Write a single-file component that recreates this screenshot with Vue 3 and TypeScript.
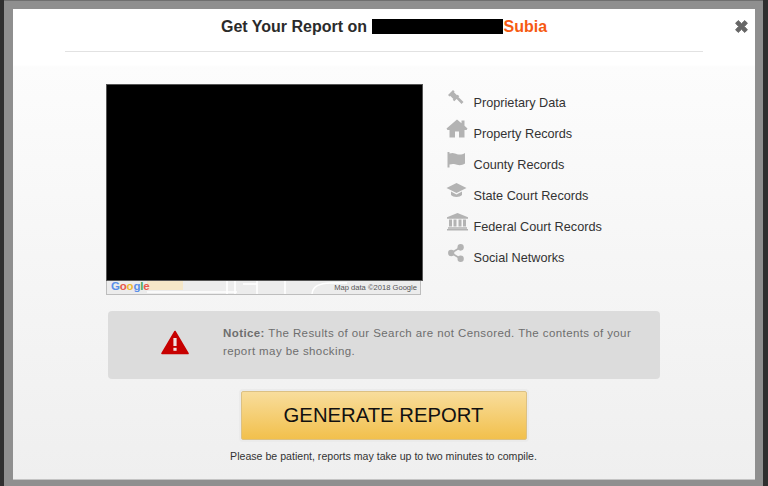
<template>
  <div class="backdrop">
    <div class="frame">
      <div class="modal">
        <button class="close" aria-label="Close">
          <svg width="13" height="13" viewBox="0 0 13 13">
            <path d="M3.2 0.6 6.5 3.7 9.8 0.6 12.4 3.2 9.3 6.5 12.4 9.8 9.8 12.4 6.5 9.3 3.2 12.4 0.6 9.8 3.7 6.5 0.6 3.2Z" fill="#666" stroke="#666" stroke-linejoin="round" />
          </svg>
        </button>

        <header class="head">
          <h1 class="title">
            Get Your Report on <span class="redacted"></span><span class="name">Subia</span>
          </h1>
        </header>

        <section class="top">
          <div class="map">
            <div class="map-black"></div>
            <div class="map-strip">
              <svg class="map-lines" width="314" height="14" viewBox="0 0 314 14" fill="none" stroke="#fff" stroke-width="1.5">
                <path d="M120 0V14M128 0V14M136 3H150V0M150 3V14M178 0V14M205 14C205 6 212 2 224 2H240" />
                <path d="M40 11H130" />
              </svg>
              <span class="map-sand"></span>
              <span class="google"><i class="g-b">G</i><i class="g-r">o</i><i class="g-y">o</i><i class="g-b">g</i><i class="g-g">l</i><i class="g-r">e</i></span>
              <span class="map-data">Map data ©2018 Google</span>
            </div>
          </div>

          <ul class="sources">
            <li v-for="item in sources" :key="item.label" class="source">
              <span class="source-icon">
                <svg width="22" height="20" viewBox="0 0 22 20" overflow="visible" v-html="item.icon"></svg>
              </span>
              <span class="source-label">{{ item.label }}</span>
            </li>
          </ul>
        </section>

        <section class="notice">
          <svg class="notice-icon" width="28" height="25" viewBox="0 0 28 25">
            <path d="M14 1.5 27 23.5H1Z" fill="#c70000" stroke="#c70000" stroke-width="1.6" stroke-linejoin="round" />
            <rect x="12.4" y="8" width="3.2" height="8" fill="#efe3e3" />
            <rect x="12.4" y="17.8" width="3.2" height="3" fill="#efe3e3" />
          </svg>
          <p class="notice-text">
            <strong>Notice:</strong> The Results of our Search are not Censored. The contents of your report may be shocking.
          </p>
        </section>

        <div class="action">
          <button class="generate">GENERATE REPORT</button>
          <p class="patience">Please be patient, reports may take up to two minutes to compile.</p>
        </div>
      </div>
    </div>
  </div>
</template>

<script setup lang="ts">
interface Source {
  label: string;
  icon: string;
}

const fill = 'fill="#b3b3b3"';

const sources: Source[] = [
  {
    label: "Proprietary Data",
    icon: `<path ${fill} d="M2 5 7 0 8.6 1.6 8 2.3 11 5.3 11.7 4.7 13.3 6.3 8.3 11.3 6.7 9.7 7.4 9 4.4 6 3.6 6.6ZM10.2 8.6 12.2 6.8 17.5 12 15.5 14Z"/>`,
  },
  {
    label: "Property Records",
    icon: `<path ${fill} transform="translate(0 -2)" d="M11 .5 15.5 4.3V1.5H18.5V6.8L21.5 9.6 20.5 11H18.5V18.5H13V12.5H9V18.5H3.5V11H1.5L.5 9.6Z"/>`,
  },
  {
    label: "County Records",
    icon: `<path ${fill} d="M1.5 0H3.5V1.6C7 .2 9 1.6 11 2.2 14 3 16.5 2.4 19 1V11.6C16.5 13 14 13.6 11 12.8 9 12.2 7 11.2 3.5 12.6V15.5H1.5Z"/>`,
  },
  {
    label: "State Court Records",
    icon: `<path ${fill} transform="translate(0.5 -2)" d="M10 2 20 7 10 12 0 7ZM4.5 10.5 10 13.4 15.5 10.5V14C13.5 16.6 6.5 16.6 4.5 14Z"/>`,
  },
  {
    label: "Federal Court Records",
    icon: `<path ${fill} transform="translate(0.5 -1) scale(1 .87)" d="M11 0 21.5 5V6.5H.5V5ZM2.5 7.5H5.5V15.5H2.5ZM7 7.5H10V15.5H7ZM12 7.5H15V15.5H12ZM16.5 7.5H19.5V15.5H16.5ZM1.5 16.5H20.5V18H1.5ZM.5 18.5H21.5V20H.5Z"/>`,
  },
  {
    label: "Social Networks",
    icon: `<g transform="translate(1.6 -1) scale(.9 .95)"><circle ${fill} cx="14.5" cy="3.5" r="3.5"/><circle ${fill} cx="4" cy="9.5" r="3.5"/><circle ${fill} cx="14.5" cy="15.5" r="3.5"/><path d="M14.5 3.5 4 9.5 14.5 15.5" fill="none" stroke="#b3b3b3" stroke-width="1.8"/></g>`,
  },
];
</script>

<style>
html,
body {
  margin: 0;
  background: #2f2f2f;
  overflow: hidden;
}
</style>

<style scoped>
.backdrop {
  width: 768px;
  height: 486px;
  padding: 0 5px 0 4px;
  box-sizing: border-box;
  background: #2f2f2f;
  font-family: "Liberation Sans", Arial, sans-serif;
}

.frame {
  height: 100%;
  padding: 8px 8px 6px 9px;
  box-sizing: border-box;
  background: #8f8f8f;
  border-top: 1px solid #6f6f6f;
}

.modal {
  position: relative;
  height: 471px;
  box-sizing: border-box;
  background: linear-gradient(#ffffff 0, #ffffff 56px, #fcfcfc 58px, #efefef 100%);
  border-bottom: 1px solid #c4c4c4;
}

.close {
  position: absolute;
  top: 11px;
  right: 7px;
  padding: 0;
  border: 0;
  background: none;
  line-height: 0;
}

.head {
  margin: 0 52px;
  height: 42px;
  border-bottom: 1px solid #e2e2e2;
}

.title {
  margin: 0;
  padding-top: 8px;
  font-size: 16px;
  line-height: 20px;
  font-weight: 700;
  color: #2b2b2b;
  text-align: center;
}

.redacted {
  display: inline-block;
  width: 131px;
  height: 15px;
  margin-left: 1px;
  vertical-align: -2px;
  background: #000;
}

.name {
  color: #f65a12;
}

.top {
  display: flex;
  margin: 32px 0 0 93px;
}

.map {
  width: 317px;
  flex: none;
}

.map-black {
  height: 197px;
  background: #000;
  border: 1px solid #555;
  box-sizing: border-box;
}

.map-strip {
  position: relative;
  width: 315px;
  height: 14px;
  box-sizing: border-box;
  background: #ececec;
  border: 1px solid #bdbdbd;
  border-top: 0;
  overflow: hidden;
}

.map-lines {
  position: absolute;
  left: 0;
  top: 0;
}

.map-sand {
  position: absolute;
  left: 40px;
  top: 0;
  width: 36px;
  height: 9px;
  background: #f5e7c8;
}

.google {
  position: absolute;
  left: 4px;
  top: -2px;
  font-size: 11.5px;
  letter-spacing: -0.2px;
  line-height: 14px;
  font-weight: 700;
}

.google i {
  font-style: normal;
}

.g-b { color: #5a8fe8; }
.g-r { color: #e8584c; }
.g-y { color: #eeb92f; }
.g-g { color: #46a85c; }

.map-data {
  position: absolute;
  right: 3px;
  top: 2px;
  font-size: 7.6px;
  line-height: 10px;
  color: #555;
  white-space: nowrap;
}

.sources {
  list-style: none;
  margin: 6px 0 0 23px;
  padding: 0;
}

.source {
  display: flex;
  height: 31px;
}

.source-icon {
  width: 27.5px;
  line-height: 0;
  flex: none;
}

.source-label {
  padding-top: 5px;
  font-size: 12.7px;
  line-height: 16px;
  color: #333;
  white-space: nowrap;
}

.notice {
  display: flex;
  align-items: center;
  width: 552px;
  height: 68px;
  margin: 16px 0 0 95px;
  padding: 0 20px 6px 53px;
  box-sizing: border-box;
  background: #dcdcdc;
  border-radius: 4px;
}

.notice-icon {
  flex: none;
  margin-right: 34px;
}

.notice-text {
  margin: 0;
  font-size: 11.5px;
  line-height: 18px;
  letter-spacing: 0.41px;
  color: #6e6e6e;
}

.action {
  text-align: center;
  margin-top: 12px;
  margin-left: -1px;
}

.generate {
  display: block;
  width: 286px;
  height: 49px;
  margin: 0 auto;
  padding: 0;
  border: 1px solid #dcc184;
  border-radius: 2px;
  background: linear-gradient(#f8dd9c, #f2c04c);
  box-shadow: 0 0 0 2px #ebebeb;
  font-family: inherit;
  font-size: 20.3px;
  color: #111;
}

.patience {
  margin: 10px 0 0;
  font-size: 10.6px;
  line-height: 13px;
  color: #333;
}
</style>
